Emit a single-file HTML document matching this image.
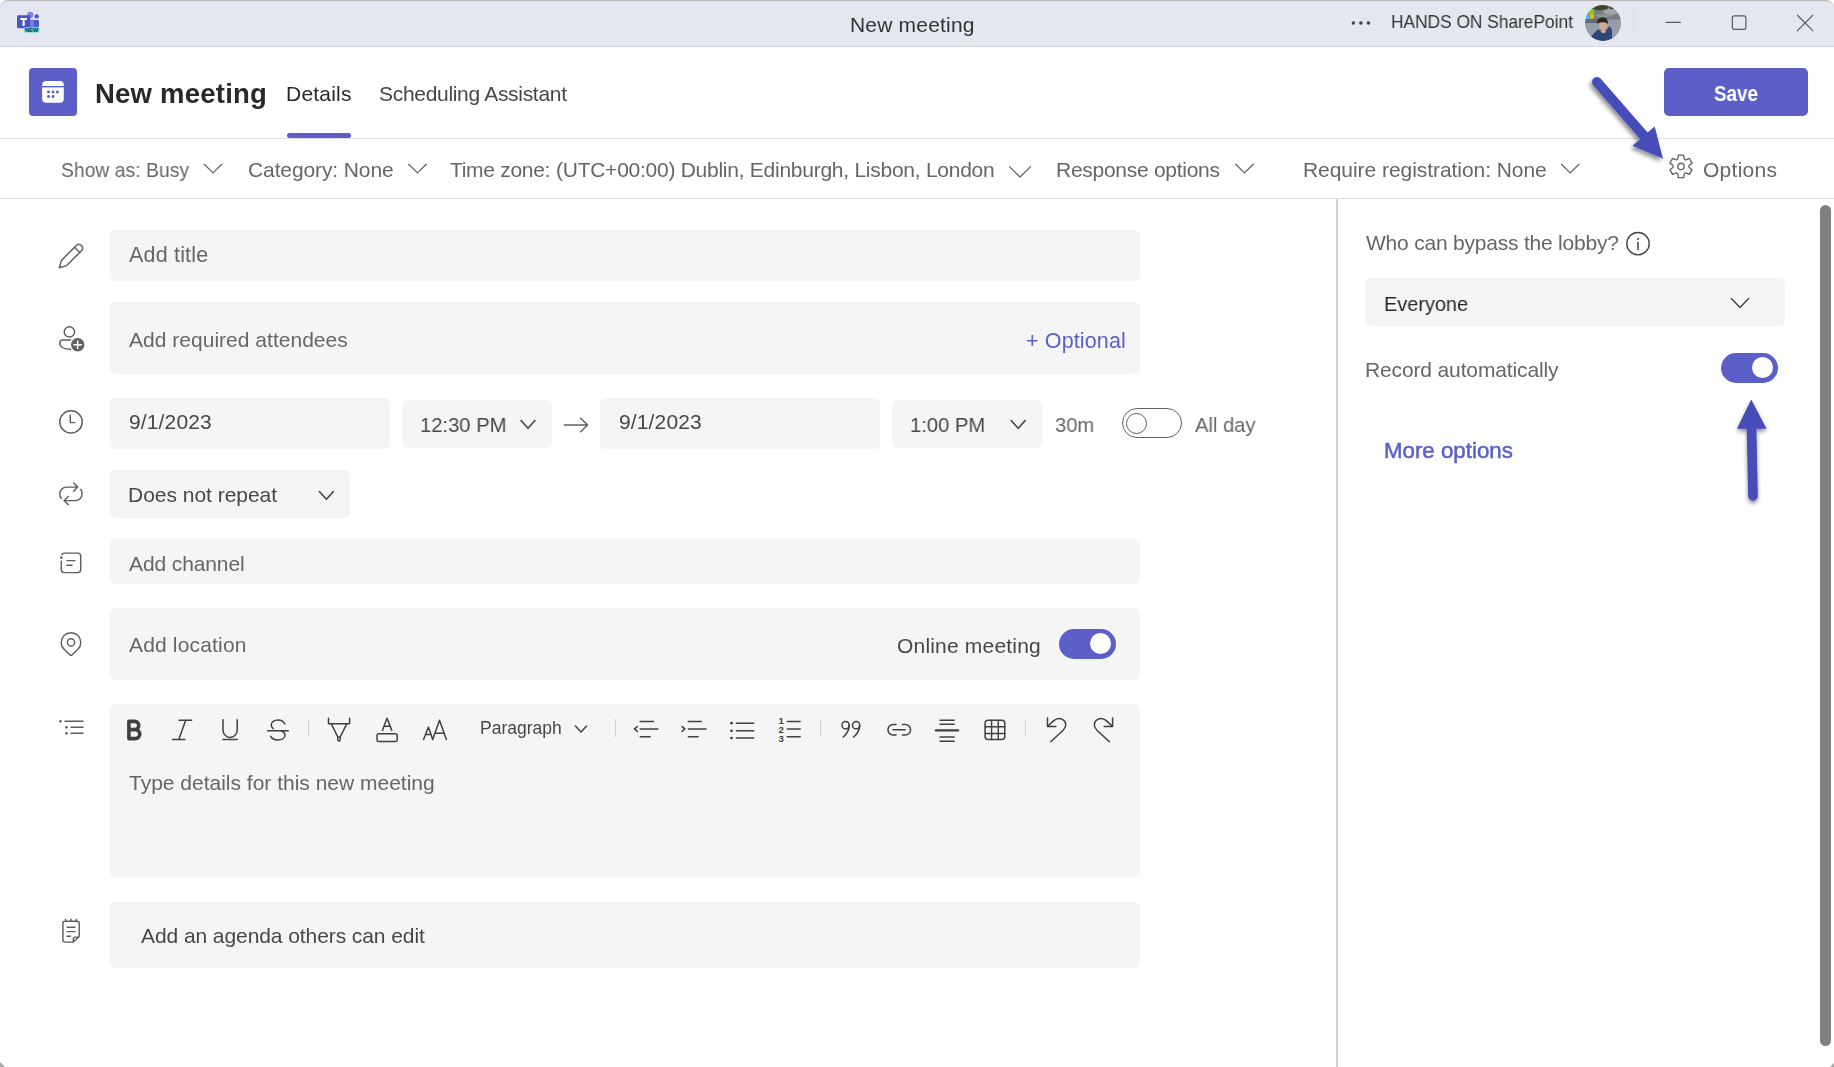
<!DOCTYPE html>
<html><head><meta charset="utf-8"><title>New meeting</title>
<style>
html,body{margin:0;padding:0;}
body{width:1834px;height:1067px;position:relative;overflow:hidden;background:#ffffff;font-family:"Liberation Sans",sans-serif;}
.a{position:absolute;}
.t{position:absolute;white-space:nowrap;line-height:40px;height:40px;will-change:transform;}
.box{position:absolute;background:#f5f5f5;border-radius:5px;}
svg{position:absolute;overflow:visible;}

</style></head>
<body>
<!-- title bar -->
<div class="a" style="left:0;top:0;width:1834px;height:46px;background:#e4e7ef;border-top:1px solid #b9b9b9;box-sizing:border-box;border-radius:8px 8px 0 0;"></div>
<div class="a" style="left:0;top:46px;width:1834px;height:1px;background:#d3d5dd;"></div>
<div class="a" style="left:55.6px;top:11.9px;width:6.9px;height:21px;overflow:hidden;"><div style="width:21px;height:21px;border-radius:50%;background:#e6e6e7;"></div></div>
<!-- header -->
<div class="a" style="left:29px;top:68px;width:48px;height:48px;background:#5b5fc7;border-radius:4px;"></div>
<div class="a" style="left:286.5px;top:133px;width:64.5px;height:5px;background:#5b5fc7;border-radius:2.5px;"></div>
<div class="a" style="left:0;top:138px;width:1834px;height:1px;background:#e0e0e0;"></div>
<div class="a" style="left:1664px;top:68px;width:144px;height:48px;background:#5b5fc7;border-radius:5px;"></div>
<div class="a" style="left:0;top:198px;width:1834px;height:1px;background:#e0e0e0;"></div>
<!-- divider -->
<div class="a" style="left:1336px;top:199px;width:2px;height:868px;background:#d3d3d3;"></div>
<!-- boxes -->
<div class="box" style="left:110px;top:230px;width:1030px;height:51px;"></div>
<div class="box" style="left:110px;top:302px;width:1030px;height:72px;"></div>
<div class="box" style="left:110px;top:398px;width:280px;height:51px;"></div>
<div class="box" style="left:402px;top:400px;width:150px;height:48px;"></div>
<div class="box" style="left:600px;top:398px;width:280px;height:51px;"></div>
<div class="box" style="left:892px;top:400px;width:150px;height:48px;"></div>
<div class="box" style="left:110px;top:470px;width:240px;height:48px;"></div>
<div class="box" style="left:110px;top:539px;width:1030px;height:45px;"></div>
<div class="box" style="left:110px;top:608px;width:1030px;height:72px;"></div>
<div class="box" style="left:110px;top:704px;width:1030px;height:172.5px;"></div>
<div class="box" style="left:110px;top:902px;width:1030px;height:66px;"></div>
<div class="box" style="left:1365px;top:278px;width:420px;height:48px;"></div>
<!-- toggles -->
<div class="a" style="left:1122px;top:408px;width:60px;height:30px;border:1px solid #616161;border-radius:15px;box-sizing:border-box;background:#fff;"></div>
<div class="a" style="left:1126px;top:412.5px;width:21px;height:21px;border:1px solid #616161;border-radius:50%;box-sizing:border-box;background:#fff;"></div>
<div class="a" style="left:1059px;top:629px;width:57px;height:30px;border-radius:15px;background:#5b5fc7;"></div>
<div class="a" style="left:1089.9px;top:633px;width:21.3px;height:21.3px;border-radius:50%;background:#fff;"></div>
<div class="a" style="left:1721px;top:353px;width:57px;height:30px;border-radius:15px;background:#5b5fc7;"></div>
<div class="a" style="left:1751.75px;top:356.95px;width:21.3px;height:21.3px;border-radius:50%;background:#fff;"></div>
<!-- scrollbar -->
<div class="a" style="left:1820px;top:205px;width:11px;height:840.75px;border-radius:5.5px;background:#808080;"></div>
<!-- window corner bits -->
<div class="a" style="left:0;top:1062px;width:0;height:0;border-left:5px solid #a3a9a9;border-top:5px solid transparent;"></div>
<div class="a" style="left:1830px;top:1063px;width:0;height:0;border-right:4px solid #a8a8a8;border-top:4px solid transparent;"></div>
<svg class="a" style="left:0;top:0" width="1834" height="1067" viewBox="0 0 1834 1067" fill="none" stroke-linecap="round" stroke-linejoin="round">
<defs><clipPath id="av"><circle cx="1603" cy="22.9" r="18"/></clipPath><filter id="bl" x="-20%" y="-20%" width="140%" height="140%"><feGaussianBlur stdDeviation="0.6"/></filter><filter id="sh" x="-30%" y="-30%" width="160%" height="160%"><feDropShadow dx="-2" dy="3" stdDeviation="2.2" flood-color="#000" flood-opacity="0.43"/></filter><filter id="sh2" x="-40%" y="-20%" width="180%" height="140%"><feDropShadow dx="0" dy="2.5" stdDeviation="2" flood-color="#000" flood-opacity="0.45"/></filter></defs>
<g stroke="none">
<circle cx="30.3" cy="14.9" r="3.1" fill="#7b83eb"/>
<circle cx="36.7" cy="16.4" r="2.2" fill="#5059c9"/>
<rect x="28" y="19.6" width="6.6" height="8" rx="1" fill="#7b83eb"/>
<rect x="33.6" y="19.9" width="5.4" height="7" rx="1.2" fill="#5059c9"/>
<rect x="17" y="15.2" width="13.2" height="13.1" rx="1.2" fill="#4b53bc"/>
<path d="M20.3 18h6.7v1.9h-2.3v6.1h-2.1v-6.1h-2.3z" fill="#fff"/>
<rect x="24" y="27" width="15.5" height="5.6" rx="2" fill="#5ccfd5"/>
<text x="25.2" y="31.7" font-family="Liberation Sans, sans-serif" font-size="5.3" font-weight="bold" fill="#123a44" textLength="13" lengthAdjust="spacingAndGlyphs">NEW</text>
</g>
<g fill="#424242" stroke="none"><circle cx="1353.4" cy="23.05" r="1.75"/><circle cx="1360.9" cy="23.05" r="1.75"/><circle cx="1368.4" cy="23.05" r="1.75"/></g>
<g clip-path="url(#av)" stroke="none"><g filter="url(#bl)">
<rect x="1582" y="2" width="42" height="42" fill="#969ca9"/>
<rect x="1582" y="2" width="42" height="17.5" fill="#777b82"/>
<ellipse cx="1611" cy="11.5" rx="8" ry="3.2" fill="#9fa3aa"/>
<ellipse cx="1604" cy="15.5" rx="9" ry="1.6" fill="#8d9198"/>
<ellipse cx="1600" cy="7.5" rx="8.5" ry="2.8" fill="#3f4a25"/>
<ellipse cx="1612" cy="8" rx="3" ry="1.3" fill="#4b4f45"/>
<rect x="1588.6" y="9.2" width="5.6" height="5.6" fill="#84c722"/>
<rect x="1589.8" y="14" width="4.4" height="4.8" fill="#ddb22a"/>
<path d="M1584.5 19L1587.6 14.2L1589.8 15V19Z" fill="#3dbfe2"/>
<rect x="1582" y="19" width="16" height="4" fill="#666a71"/>
<path d="M1590.5 37L1598 29.3L1602 31L1606 30L1609.3 26.2L1612 29.3V44H1588Z" fill="#2b4776"/>
<ellipse cx="1603.2" cy="27" rx="4.2" ry="5.8" fill="#c9a999"/>
<path d="M1599.3 28.5C1600 33.5 1606.5 33.5 1607.2 28.5C1605 31 1601.5 31 1599.3 28.5Z" fill="#7d675b"/>
<ellipse cx="1603.4" cy="31.6" rx="2.2" ry="1.5" fill="#d5b7a8"/>
<path d="M1597.2 23.5C1596.8 19.5 1599.5 17.3 1602.8 17.5C1606.3 17.7 1608.4 20 1607.8 23.8C1606 21.8 1600.5 21.6 1597.2 23.5Z" fill="#2a2624"/>
</g></g>
<path d="M1633.5 8V37" stroke="#dcdee6" stroke-width="1"/>
<g stroke="#5a5a5a" stroke-width="1.2"><path d="M1666 22.3H1680.3"/><rect x="1732.3" y="15.9" width="13.6" height="13.4" rx="2"/><path d="M1797.4 15.3L1812.8 30.6M1812.8 15.3L1797.4 30.6"/></g>
<g stroke="none"><rect x="42.1" y="81.1" width="21.7" height="21.7" rx="4" fill="#fff"/><rect x="42" y="86" width="22" height="1.4" fill="#5b5fc7"/>
<circle cx="48.5" cy="92" r="1.45" fill="#5b5fc7"/>
<circle cx="53" cy="92" r="1.45" fill="#5b5fc7"/>
<circle cx="57.4" cy="92" r="1.45" fill="#5b5fc7"/>
<circle cx="48.5" cy="96.5" r="1.45" fill="#5b5fc7"/>
<circle cx="53" cy="96.5" r="1.45" fill="#5b5fc7"/>
</g>
<path d="M204.20 164.30L213.00 172.90L221.80 164.30" stroke="#616161" stroke-width="1.25"/>
<path d="M408.70 164.30L417.50 172.90L426.30 164.30" stroke="#616161" stroke-width="1.25"/>
<path d="M1235.70 164.30L1244.50 172.90L1253.30 164.30" stroke="#616161" stroke-width="1.25"/>
<path d="M1561.40 164.30L1570.20 172.90L1579.00 164.30" stroke="#616161" stroke-width="1.25"/>
<path d="M1009.40 166.60L1020.00 177.00L1030.60 166.60" stroke="#616161" stroke-width="1.3"/>
<path d="M521.00 420.50L528.00 428.30L535.00 420.50" stroke="#424242" stroke-width="1.6"/>
<path d="M1011.20 420.50L1018.20 428.30L1025.20 420.50" stroke="#424242" stroke-width="1.6"/>
<path d="M319.40 491.50L326.40 499.30L333.40 491.50" stroke="#424242" stroke-width="1.6"/>
<path d="M575.40 726.00L581.00 732.00L586.60 726.00" stroke="#424242" stroke-width="1.5"/>
<path d="M1731.40 298.60L1740.00 307.40L1748.60 298.60" stroke="#424242" stroke-width="1.4"/>
<path d="M564.3 425H587.5M580.6 418.3L587.6 425L580.6 431.7" stroke="#616161" stroke-width="1.5"/>
<path d="M1677.92 158.37 L1678.29 155.12 L1683.71 155.12 L1684.08 158.37 Q1684.53 160.28 1686.41 159.72 L1689.41 158.42 L1692.12 163.11 L1689.49 165.05 Q1688.07 166.40 1689.49 167.75 L1692.12 169.69 L1689.41 174.38 L1686.41 173.08 Q1684.53 172.52 1684.08 174.43 L1683.71 177.68 L1678.29 177.68 L1677.92 174.43 Q1677.47 172.52 1675.59 173.08 L1672.59 174.38 L1669.88 169.69 L1672.51 167.75 Q1673.93 166.40 1672.51 165.05 L1669.88 163.11 L1672.59 158.42 L1675.59 159.72 Q1677.47 160.28 1677.92 158.37 Z" stroke="#616161" stroke-width="1.3"/><circle cx="1681" cy="166.4" r="3.15" stroke="#616161" stroke-width="1.3"/>
<circle cx="1638" cy="243.7" r="11.2" stroke="#424242" stroke-width="1.4"/><path d="M1638 242.4V249.5" stroke="#424242" stroke-width="1.5"/><circle cx="1638" cy="239" r="1" fill="#424242" stroke="none"/>
<g stroke="#5e5e5e" stroke-width="1.45">
<path d="M59.3 267.7L61.4 260.4L76.3 245.5A3.68 3.68 0 0 1 81.5 250.7L66.6 265.6Z M74.6 247.2L79.8 252.4"/>
<circle cx="69.4" cy="331.9" r="5.2"/><path d="M70.6 340H62.4A2.7 2.7 0 0 0 59.7 342.7C59.7 347 64.5 349.3 70.6 349.3"/>
<circle cx="71" cy="421.9" r="11.2"/><path d="M70.3 415.2V422.6H74.8"/>
<path d="M61.2 498.4C60.3 497.2 59.8 495.6 59.8 493.9A6.8 6.8 0 0 1 66.6 487.1H77.4M73.6 483.1L77.7 487.1L73.6 491.2M80.7 489.4C81.6 490.6 82.1 492.2 82.1 493.9A6.8 6.8 0 0 1 75.3 500.6H64.4M68.3 496.5L64.1 500.6L68.3 504.7"/>
<path d="M61.9 554.6A3 3 0 0 1 64.3 553.1H77.7A3 3 0 0 1 80.7 556.1V569.6A3 3 0 0 1 77.7 572.6H64.3A3 3 0 0 1 61.3 569.6V561.3M66.9 560.6H75M66.9 565.3H72"/>
<path d="M64.1 649.3A9.75 9.75 0 1 1 77.9 649.3L72.2 654.8A1.7 1.7 0 0 1 69.8 654.8Z"/><circle cx="71" cy="642.4" r="3.6"/>
<path d="M65 721.2H83M71 727.2H83M71 733.2H83" stroke-width="1.4"/>
<path d="M73.3 942.1H64.9A2 2 0 0 1 62.9 940.1V923.3A2 2 0 0 1 64.9 921.3H77.2A2 2 0 0 1 79.2 923.3V936.4L73.3 942.1V938.7A1.6 1.6 0 0 1 74.9 937.1H78.8M65.6 919.3V921.3M71 919.3V921.3M76.4 919.3V921.3M67.1 927.3H74.9M67.1 931.6H74.9M67.1 936.2H70.4"/>
</g>
<g fill="#616161" stroke="none"><circle cx="77.7" cy="344.7" r="6.7"/><circle cx="61.3" cy="557.6" r="1.3"/><circle cx="60.5" cy="721.2" r="1.3"/><circle cx="66.5" cy="727.2" r="1.3"/><circle cx="66.5" cy="733.2" r="1.3"/></g>
<path d="M74 344.7H81.4M77.7 341V348.4" stroke="#fff" stroke-width="1.5"/>
<g stroke="#d1d1d1" stroke-width="1" stroke-linecap="butt"><path d="M308.5 719V737M615.5 719V737M820.5 719V737M1025.5 719V737"/></g>
<g stroke="#404040" stroke-width="1.5">
<path d="M128.9 721.4V738.6H135.3A4.5 4.5 0 0 0 135.3 729.6H128.9M128.9 721.4H134.7A4.1 4.1 0 0 1 134.7 729.6" stroke-width="3.6" stroke-linejoin="round"/>
<path d="M179 720.3H191.6M172.5 739.6H184.9M185.7 720.3L178.8 739.6"/>
<path d="M223 719.8V730.3A7.1 7.1 0 0 0 237.2 730.3V719.8M223 739.6H237.2"/>
<path d="M267.7 730.8H288.3M284.8 723.9C283.6 721.6 281 720 278 720C274.2 720 271.2 722.2 271.2 725C271.2 726.5 272 727.7 273.3 728.6M281 730.8C283.4 731.6 285 733.2 285 735.2C285 738 282 739.9 278 739.9C274.5 739.9 271.8 738.6 270.6 736.4"/>
<path d="M328.5 718.3V723.7H349.6V718.3M331.2 723.7L337.8 737V739.8A1.2 1.2 0 0 0 340.2 739.8V737L346.9 723.7M337.8 737H340.2"/>
<path d="M382.4 730.4L387 718.3L391.8 730.4M383.9 726.2H390.2"/><rect x="377" y="733.7" width="20.2" height="7.7" rx="2"/>
<path d="M423.6 739.6L428.4 727.1L432.7 739.6L439.5 720.3L446.4 739.6M425.6 734.5H431M435.9 733.3H443.3"/>
<path d="M640.2 721.5H653.5M640.2 728.9H657.9M640.2 736.75H650.3M637.3 726.6L634.5 728.9L637.3 731.4" stroke-width="1.5"/>
<path d="M688.3 721.5H701.3M688.3 728.9H706M688.3 736.75H698.1M682.1 726.6L684.9 728.9L682.1 731.4" stroke-width="1.5"/>
<path d="M736.4 723.2H753.7M736.4 730.8H753.7M736.4 738.1H753.7" stroke-width="1.5"/>
<path d="M787.4 721.5H800.2M787.4 728.9H800.2M787.4 736.75H800.2" stroke-width="1.5"/>
<circle cx="845.6" cy="725.2" r="3.6"/><path d="M849.2 725.2C849.2 730 846.5 734 843.2 737"/><circle cx="856.1" cy="725.2" r="3.6"/><path d="M859.7 725.2C859.7 730 857 734 853.7 737"/>
<path d="M896 724.5H893.2A5.25 5.25 0 0 0 893.2 735H896M902.5 724.5H905.3A5.25 5.25 0 0 1 905.3 735H902.5M893 729.8H905.2" stroke-width="1.5"/>
<path d="M940 720.3H954.2M940 724.2H954.2M940 737H954.2M940 741.2H954.2"/><path d="M936 730.4H958" stroke-width="2.4"/>
<rect x="985.1" y="720.3" width="19.7" height="19.3" rx="3" stroke-width="1.5"/><path d="M991.6 720.3V739.6M998.3 720.3V739.6M985.1 726.7H1004.8M985.1 733.5H1004.8" stroke-width="1.4"/>
<path d="M1047.5 718.1V726.5H1055.9M1047.5 726.5L1053.5 720.9C1056 718.6 1059.5 717.8 1062.3 719.3C1066.5 721.5 1067 726.5 1063.2 730.2L1050.7 741.7" stroke-width="1.5"/>
<g transform="translate(2160.1 0) scale(-1 1)"><path d="M1047.5 718.1V726.5H1055.9M1047.5 726.5L1053.5 720.9C1056 718.6 1059.5 717.8 1062.3 719.3C1066.5 721.5 1067 726.5 1063.2 730.2L1050.7 741.7" stroke-width="1.5"/></g>
</g>
<g fill="#424242" stroke="none"><circle cx="731.5" cy="723.2" r="1.4"/><circle cx="731.5" cy="730.8" r="1.4"/><circle cx="731.5" cy="738.1" r="1.4"/></g>
<g fill="#424242" stroke="none" font-family="Liberation Sans, sans-serif" font-size="9.6" font-weight="bold"><text x="778.5" y="724">1</text><text x="778.5" y="732.9">2</text><text x="778.5" y="742">3</text></g>
<g filter="url(#sh)" stroke="none"><path d="M1597 82L1644.5 136.5" stroke="#464eb8" stroke-width="10" fill="none"/><path d="M1654.7 126.6L1663 158.8L1632.6 145.7Z" fill="#464eb8"/></g>
<g filter="url(#sh2)" stroke="none"><path d="M1751.5 427L1753 496" stroke="#464eb8" stroke-width="9.7" fill="none"/><path d="M1751.2 399.6L1766.6 428.8H1736.9Z" fill="#464eb8"/></g>
</svg>
<div class="t" style="left:850.00px;top:4.76px;font-size:21.0px;letter-spacing:0.187px;font-weight:normal;color:#333333">New meeting</div>
<div class="t" style="left:1390.86px;top:1.92px;font-size:18.5px;letter-spacing:0.000px;font-weight:normal;color:#333333;transform-origin:0 50%;transform:scaleX(0.9359)">HANDS ON SharePoint</div>
<div class="t" style="left:95.00px;top:73.51px;font-size:27.5px;letter-spacing:0.218px;font-weight:bold;color:#292929">New meeting</div>
<div class="t" style="left:286.00px;top:73.75px;font-size:21.0px;letter-spacing:0.218px;font-weight:normal;color:#292929">Details</div>
<div class="t" style="left:378.70px;top:73.75px;font-size:21.0px;letter-spacing:-0.306px;font-weight:normal;color:#474747">Scheduling Assistant</div>
<div class="t" style="left:1714.00px;top:73.58px;font-size:21.5px;letter-spacing:0.000px;font-weight:bold;color:#ffffff;transform-origin:0 50%;transform:scaleX(0.8755)">Save</div>
<div class="t" style="left:60.50px;top:149.75px;font-size:21.0px;letter-spacing:0.000px;font-weight:normal;color:#666666;transform-origin:0 50%;transform:scaleX(0.9218)">Show as: Busy</div>
<div class="t" style="left:248.00px;top:149.75px;font-size:21.0px;letter-spacing:-0.108px;font-weight:normal;color:#666666">Category: None</div>
<div class="t" style="left:449.50px;top:149.75px;font-size:21.0px;letter-spacing:-0.306px;font-weight:normal;color:#666666">Time zone:</div>
<div class="t" style="left:556.00px;top:149.75px;font-size:21.0px;letter-spacing:-0.258px;font-weight:normal;color:#666666">(UTC+00:00) Dublin, Edinburgh, Lisbon, London</div>
<div class="t" style="left:1056.00px;top:149.75px;font-size:21.0px;letter-spacing:-0.274px;font-weight:normal;color:#666666">Response options</div>
<div class="t" style="left:1302.60px;top:149.75px;font-size:21.0px;letter-spacing:-0.054px;font-weight:normal;color:#666666">Require registration: None</div>
<div class="t" style="left:1703.00px;top:149.75px;font-size:21.0px;letter-spacing:0.271px;font-weight:normal;color:#666666">Options</div>
<div class="t" style="left:128.75px;top:235.08px;font-size:21.5px;letter-spacing:0.190px;font-weight:normal;color:#666666">Add title</div>
<div class="t" style="left:128.75px;top:319.75px;font-size:21.0px;letter-spacing:0.020px;font-weight:normal;color:#666666">Add required attendees</div>
<div class="t" style="left:1026.00px;top:320.58px;font-size:21.5px;letter-spacing:0.130px;font-weight:normal;color:#5b5fc7">+ Optional</div>
<div class="t" style="left:128.75px;top:402.25px;font-size:21.0px;letter-spacing:0.134px;font-weight:normal;color:#474747">9/1/2023</div>
<div class="t" style="left:420.04px;top:404.75px;font-size:21.0px;letter-spacing:0.000px;font-weight:normal;color:#474747;transform-origin:0 50%;transform:scaleX(0.9612)">12:30 PM</div>
<div class="t" style="left:618.75px;top:402.25px;font-size:21.0px;letter-spacing:0.134px;font-weight:normal;color:#474747">9/1/2023</div>
<div class="t" style="left:910.04px;top:404.75px;font-size:21.0px;letter-spacing:0.000px;font-weight:normal;color:#474747;transform-origin:0 50%;transform:scaleX(0.9609)">1:00 PM</div>
<div class="t" style="left:1055.00px;top:405.25px;font-size:21.0px;letter-spacing:0.000px;font-weight:normal;color:#666666;transform-origin:0 50%;transform:scaleX(0.9601)">30m</div>
<div class="t" style="left:1195.00px;top:405.25px;font-size:21.0px;letter-spacing:0.000px;font-weight:normal;color:#666666;transform-origin:0 50%;transform:scaleX(0.9602)">All day</div>
<div class="t" style="left:127.75px;top:475.25px;font-size:21.0px;letter-spacing:-0.025px;font-weight:normal;color:#474747">Does not repeat</div>
<div class="t" style="left:128.75px;top:543.50px;font-size:21.0px;letter-spacing:-0.110px;font-weight:normal;color:#666666">Add channel</div>
<div class="t" style="left:128.75px;top:625.25px;font-size:21.0px;letter-spacing:0.168px;font-weight:normal;color:#666666">Add location</div>
<div class="t" style="left:897.00px;top:625.75px;font-size:21.0px;letter-spacing:0.187px;font-weight:normal;color:#474747">Online meeting</div>
<div class="t" style="left:479.50px;top:708.46px;font-size:17.5px;letter-spacing:0.001px;font-weight:normal;color:#474747">Paragraph</div>
<div class="t" style="left:128.60px;top:763.46px;font-size:21.0px;letter-spacing:-0.004px;font-weight:normal;color:#666666">Type details for this new meeting</div>
<div class="t" style="left:140.60px;top:916.46px;font-size:21.0px;letter-spacing:-0.079px;font-weight:normal;color:#474747">Add an agenda others can edit</div>
<div class="t" style="left:1365.75px;top:222.75px;font-size:21.0px;letter-spacing:-0.211px;font-weight:normal;color:#666666">Who can bypass the lobby?</div>
<div class="t" style="left:1384.05px;top:283.50px;font-size:21.0px;letter-spacing:0.000px;font-weight:normal;color:#292929;transform-origin:0 50%;transform:scaleX(0.9479)">Everyone</div>
<div class="t" style="left:1364.75px;top:349.75px;font-size:21.0px;letter-spacing:-0.136px;font-weight:normal;color:#666666">Record automatically</div>
<div class="t" style="left:1384.22px;top:430.58px;font-size:21.5px;letter-spacing:0.000px;font-weight:normal;color:#5b5fc7;-webkit-text-stroke:0.5px #5b5fc7;transform-origin:0 50%;transform:scaleX(1.0363)">More options</div>
</body></html>
